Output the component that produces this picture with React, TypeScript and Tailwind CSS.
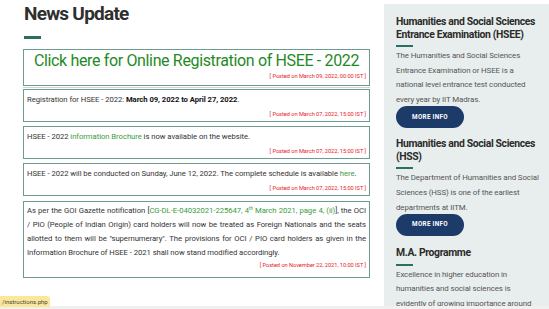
import React from "react";

const Posted = ({ children, className = "" }: { children: React.ReactNode; className?: string }) => (
  <div className={"text-right text-[5.7px] leading-[8px] text-[#e8201f] tracking-[-0.05px] " + className}>{children}</div>
);

const Box = ({ children, className = "" }: { children: React.ReactNode; className?: string }) => (
  <div className={"border-[1.5px] border-[#6d9b90] px-[3px] " + className}>{children}</div>
);

const body = "text-[7.7px] tracking-[-0.05px] text-[#333]";

const Side = ({ title, children, button = true, className = "mb-[12px]" }: { title: React.ReactNode; children: React.ReactNode; button?: boolean; className?: string }) => (
  <div className={className}>
    <h3 className="text-[10.4px] leading-[12.5px] font-bold text-[#2b2b2b] tracking-[-0.35px]">{title}</h3>
    <div className="w-[17px] h-[2px] bg-[#2b6f63] mt-[4px] mb-[2px]" />
    <p className="text-[7.9px] leading-[14.6px] text-[#555] tracking-[-0.1px]">{children}</p>
    {button && (
      <div className="-mt-[1px] w-[68px] h-[22px] rounded-full bg-[#1c3b69] flex items-center justify-center text-white text-[6.3px] font-bold tracking-[0.3px]">
        MORE INFO
      </div>
    )}
  </div>
);

export default function App() {
  return (
    <div className="w-[549px] h-[309px] overflow-hidden bg-white relative" style={{ fontFamily: "Roboto, 'Noto Sans', sans-serif" }}>
      <div className="flex h-[306px]">
        <div className="w-[384px] pl-[23px] pr-[14px] pt-[2px]">
          <h1 className="text-[19px] leading-[24px] font-bold text-[#2f2f2f] pl-[1px] tracking-[-0.75px]">News Update</h1>
          <div className="w-[17px] h-[3px] bg-[#2b6f63] ml-[1px] mt-[10px]" />
          <Box className="mt-[10px] h-[37px]">
            <div className="text-center text-[16px] leading-[20px] text-[#1f8a1f] tracking-[-0.35px] pt-[1px] whitespace-nowrap">Click here for Online Registration of HSEE - 2022</div>
            <Posted className="mt-[1px]">[ Posted on March 09, 2022, 00:00 IST ]</Posted>
          </Box>
          <div className="h-[1px] bg-[#c9d6d3] mt-[1px]" />
          <Box className="mt-[1px] h-[33px]">
            <div className={body + " leading-[10px] mt-[5px] whitespace-nowrap"}>
              Registration for HSEE - 2022: <b className="text-[#111]">March 09, 2022 to April 27, 2022</b>.
            </div>
            <Posted className="mt-[5px]">[ Posted on March 07, 2022, 15:00 IST ]</Posted>
          </Box>
          <Box className="mt-[4px] h-[33px]">
            <div className={body + " leading-[10px] mt-[5px] whitespace-nowrap"}>
              HSEE - 2022 <span className="text-[#3c9a3c]">information Brochure</span> is now available on the website.
            </div>
            <Posted className="mt-[5px]">[ Posted on March 07, 2022, 15:00 IST ]</Posted>
          </Box>
          <Box className="mt-[4px] h-[33px]">
            <div className={body + " leading-[10px] mt-[5px] whitespace-nowrap"}>
              HSEE - 2022 will be conducted on Sunday, June 12, 2022. The complete schedule is available <span className="text-[#3c9a3c]">here</span>.
            </div>
            <Posted className="mt-[5px]">[ Posted on March 07, 2022, 15:00 IST ]</Posted>
          </Box>
          <Box className="mt-[5px] h-[77px]">
            <div className={body + " leading-[14.2px] mt-[1.5px] text-justify"}>
              As per the GOI Gazette notification [<span className="text-[#3c9a3c]">CG-DL-E-04032021-225647, 4<span className="relative -top-[3px] text-[4.5px] leading-none">th</span> March 2021, page 4, (ii)</span>], the OCI /{"\u00a0"}PIO (People of Indian Origin) card holders will now be treated as Foreign Nationals and the seats allotted to them will be "supernumerary". The provisions for OCI / PIO card holders as given in the Information Brochure of HSEE - 2021 shall now stand modified accordingly.
            </div>
            <Posted className="mt-[1px]">[ Posted on November 22, 2021, 10:00 IST ]</Posted>
          </Box>
        </div>
        <div className="flex-1 bg-[#e8eeed] mt-[4px] pl-[12px] pr-[10px] pt-[12px]">
          <Side className="mb-[10px]" title={<>Humanities and Social Sciences Entrance Examination (HSEE)</>}>
            The Humanities and Social Sciences Entrance Examination or HSEE is a national level entrance test conducted every year by IIT Madras.
          </Side>
          <Side className="mb-[11px]" title={<>Humanities and Social Sciences (HSS)</>}>
            The Department of Humanities and Social Sciences (HSS) is one of the earliest departments at IITM.
          </Side>
          <Side title="M.A. Programme" button={false}>
            Excellence in higher education in humanities and social sciences is evidently of growing importance around
          </Side>
        </div>
      </div>
      <div className="absolute left-0 bottom-0 w-full h-[3px] bg-[#f0f0f0]" />
      <div className="absolute left-0 bottom-[2px] h-[11px] px-[2px] bg-[#fbe79a] rounded-tr-[3px] text-[6px] leading-[11px] text-[#444]">/instructions.php</div>
    </div>
  );
}
